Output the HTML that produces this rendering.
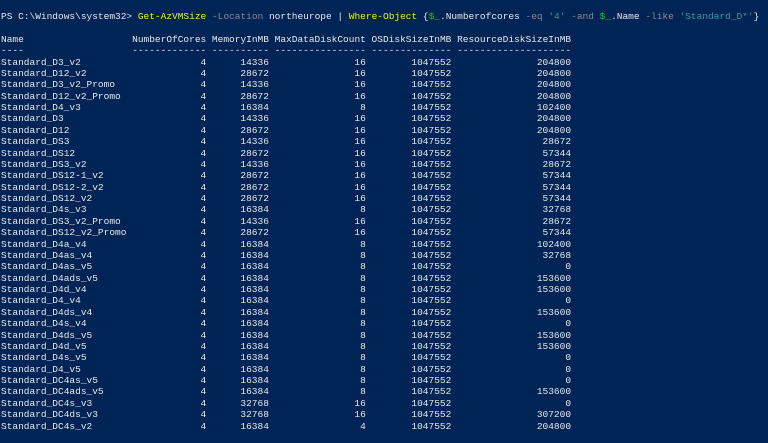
<!DOCTYPE html>
<html><head><meta charset="utf-8"><style>
html,body{margin:0;padding:0;background:#012456;width:768px;height:443px;overflow:hidden}
#t{position:absolute;left:1px;top:11px;font-family:"Liberation Mono",monospace;font-size:9.5px;line-height:11.39px;color:#e8e8e8;white-space:normal}
#t>div{height:11.39px;white-space:pre}
.r span{display:inline-block;text-align:right}
.r span:nth-child(1){width:22ch;text-align:left}
.r span:nth-child(2){width:14ch}
.r span:nth-child(3){width:11ch}
.r span:nth-child(4){width:17ch}
.r span:nth-child(5){width:15ch}
.r span:nth-child(6){width:21ch}
.y{color:#f0f020}.g{color:#8a8a8a}.s{color:#3a9aa0}.v{color:#16c60c}
</style></head><body><div id="t"><div>PS C:\Windows\system32&gt; <span class="y">Get-AzVMSize</span> <span class="g">-Location</span> northeurope | <span class="y">Where-Object</span> {<span class="v">$_</span>.Numberofcores <span class="g">-eq</span> <span class="s">'4'</span> <span class="g">-and</span> <span class="v">$_</span>.Name <span class="g">-like</span> <span class="s">'Standard_D*'</span>}</div>
<div></div>
<div>Name                   NumberOfCores MemoryInMB MaxDataDiskCount OSDiskSizeInMB ResourceDiskSizeInMB</div>
<div>----                   ------------- ---------- ---------------- -------------- --------------------</div>
<div class="r"><span>Standard_D3_v2</span><span>4</span><span>14336</span><span>16</span><span>1047552</span><span>204800</span></div>
<div class="r"><span>Standard_D12_v2</span><span>4</span><span>28672</span><span>16</span><span>1047552</span><span>204800</span></div>
<div class="r"><span>Standard_D3_v2_Promo</span><span>4</span><span>14336</span><span>16</span><span>1047552</span><span>204800</span></div>
<div class="r"><span>Standard_D12_v2_Promo</span><span>4</span><span>28672</span><span>16</span><span>1047552</span><span>204800</span></div>
<div class="r"><span>Standard_D4_v3</span><span>4</span><span>16384</span><span>8</span><span>1047552</span><span>102400</span></div>
<div class="r"><span>Standard_D3</span><span>4</span><span>14336</span><span>16</span><span>1047552</span><span>204800</span></div>
<div class="r"><span>Standard_D12</span><span>4</span><span>28672</span><span>16</span><span>1047552</span><span>204800</span></div>
<div class="r"><span>Standard_DS3</span><span>4</span><span>14336</span><span>16</span><span>1047552</span><span>28672</span></div>
<div class="r"><span>Standard_DS12</span><span>4</span><span>28672</span><span>16</span><span>1047552</span><span>57344</span></div>
<div class="r"><span>Standard_DS3_v2</span><span>4</span><span>14336</span><span>16</span><span>1047552</span><span>28672</span></div>
<div class="r"><span>Standard_DS12-1_v2</span><span>4</span><span>28672</span><span>16</span><span>1047552</span><span>57344</span></div>
<div class="r"><span>Standard_DS12-2_v2</span><span>4</span><span>28672</span><span>16</span><span>1047552</span><span>57344</span></div>
<div class="r"><span>Standard_DS12_v2</span><span>4</span><span>28672</span><span>16</span><span>1047552</span><span>57344</span></div>
<div class="r"><span>Standard_D4s_v3</span><span>4</span><span>16384</span><span>8</span><span>1047552</span><span>32768</span></div>
<div class="r"><span>Standard_DS3_v2_Promo</span><span>4</span><span>14336</span><span>16</span><span>1047552</span><span>28672</span></div>
<div class="r"><span>Standard_DS12_v2_Promo</span><span>4</span><span>28672</span><span>16</span><span>1047552</span><span>57344</span></div>
<div class="r"><span>Standard_D4a_v4</span><span>4</span><span>16384</span><span>8</span><span>1047552</span><span>102400</span></div>
<div class="r"><span>Standard_D4as_v4</span><span>4</span><span>16384</span><span>8</span><span>1047552</span><span>32768</span></div>
<div class="r"><span>Standard_D4as_v5</span><span>4</span><span>16384</span><span>8</span><span>1047552</span><span>0</span></div>
<div class="r"><span>Standard_D4ads_v5</span><span>4</span><span>16384</span><span>8</span><span>1047552</span><span>153600</span></div>
<div class="r"><span>Standard_D4d_v4</span><span>4</span><span>16384</span><span>8</span><span>1047552</span><span>153600</span></div>
<div class="r"><span>Standard_D4_v4</span><span>4</span><span>16384</span><span>8</span><span>1047552</span><span>0</span></div>
<div class="r"><span>Standard_D4ds_v4</span><span>4</span><span>16384</span><span>8</span><span>1047552</span><span>153600</span></div>
<div class="r"><span>Standard_D4s_v4</span><span>4</span><span>16384</span><span>8</span><span>1047552</span><span>0</span></div>
<div class="r"><span>Standard_D4ds_v5</span><span>4</span><span>16384</span><span>8</span><span>1047552</span><span>153600</span></div>
<div class="r"><span>Standard_D4d_v5</span><span>4</span><span>16384</span><span>8</span><span>1047552</span><span>153600</span></div>
<div class="r"><span>Standard_D4s_v5</span><span>4</span><span>16384</span><span>8</span><span>1047552</span><span>0</span></div>
<div class="r"><span>Standard_D4_v5</span><span>4</span><span>16384</span><span>8</span><span>1047552</span><span>0</span></div>
<div class="r"><span>Standard_DC4as_v5</span><span>4</span><span>16384</span><span>8</span><span>1047552</span><span>0</span></div>
<div class="r"><span>Standard_DC4ads_v5</span><span>4</span><span>16384</span><span>8</span><span>1047552</span><span>153600</span></div>
<div class="r"><span>Standard_DC4s_v3</span><span>4</span><span>32768</span><span>16</span><span>1047552</span><span>0</span></div>
<div class="r"><span>Standard_DC4ds_v3</span><span>4</span><span>32768</span><span>16</span><span>1047552</span><span>307200</span></div>
<div class="r"><span>Standard_DC4s_v2</span><span>4</span><span>16384</span><span>4</span><span>1047552</span><span>204800</span></div>
</div></body></html>
